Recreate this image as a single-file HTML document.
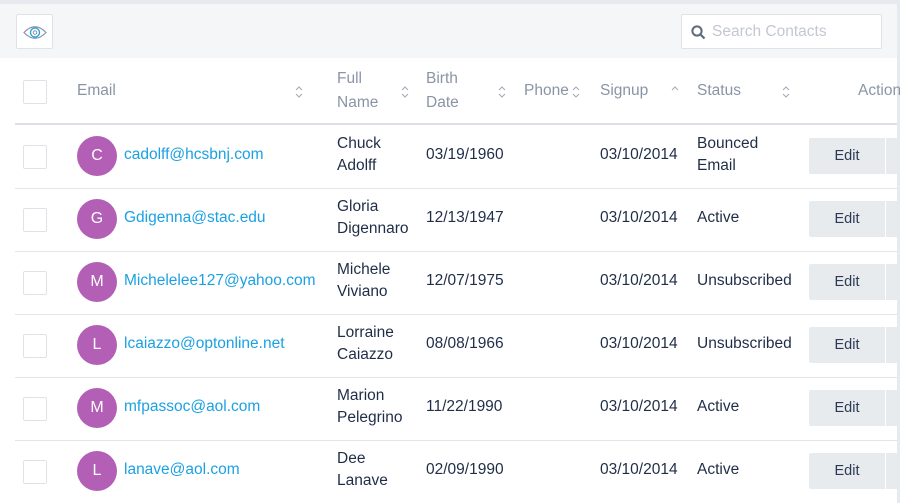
<!DOCTYPE html>
<html><head><style>
*{margin:0;padding:0;box-sizing:border-box}
body{width:900px;height:503px;overflow:hidden;background:#fff;font-family:"Liberation Sans",sans-serif;position:relative}
.top{position:absolute;left:0;top:0;width:900px;height:4px;background:#e6e9ed}
.bar{position:absolute;left:0;top:4px;width:897px;height:54px;background:#f5f6f8}
.rb{position:absolute;left:897px;top:0;width:3px;height:503px;background:#e6e9ed}
.eye{position:absolute;left:16px;top:14px;width:37px;height:35px;background:#fff;border:1px solid #dfe3e8;border-radius:2px}
.search{position:absolute;left:681px;top:14px;width:201px;height:35px;background:#fff;border:1px solid #dfe3e8;border-radius:2px;color:#c3c8d0;font-size:15.5px;line-height:33px;padding-left:30px}
.search svg{position:absolute;left:9px;top:10px}
.hd{position:absolute;color:#8a94a6;font-size:15.5px;line-height:24px}
.cb{position:absolute;left:23px;width:24px;height:24px;border:1px solid #dfe3e8;border-radius:2px;background:#fff}
.line{position:absolute;left:15px;width:882px;height:1px;background:#e2e5e9}
.row{position:absolute;left:0;width:897px;height:63px}
.row .cb{top:20px}
.av{position:absolute;left:77px;top:11px;width:40px;height:40px;border-radius:50%;background:#b25fb5;color:#fff;font-size:16px;text-align:center;line-height:40px}
.em{position:absolute;left:124px;top:19px;color:#1ba1e2;font-size:15.5px;line-height:22px}
.t{position:absolute;color:#1f2d47;font-size:15.5px;line-height:22px}
.t1{top:19px}.t2{top:8px}
.ed{position:absolute;left:809px;top:13px;width:76px;height:36px;background:#e8ebee;color:#2a3a54;font-size:14.5px;text-align:center;line-height:36px;border-radius:2px 0 0 2px}
.ed2{position:absolute;left:886px;top:13px;width:11px;height:36px;background:#e8ebee}
</style></head><body>
<div class="top"></div><div class="bar"></div><div class="rb"></div>
<div class="eye"><svg width="37" height="35" viewBox="0 0 37 35"><path d="M7 17.5 Q18 6 29 17.5 Q18 29 7 17.5Z" fill="none" stroke="#8a94a6" stroke-width="1.2"/><circle cx="18" cy="17.5" r="4.5" fill="none" stroke="#1ba1e2" stroke-width="1.3"/><circle cx="18" cy="17.5" r="1.8" fill="none" stroke="#8a94a6" stroke-width="1"/></svg></div>
<div class="search"><svg width="15" height="15" viewBox="0 0 15 15"><circle cx="6" cy="6" r="4.6" fill="none" stroke="#5f6b7d" stroke-width="2"/><path d="M9.4 9.4 L13.5 13.5" stroke="#5f6b7d" stroke-width="2.2"/></svg>Search Contacts</div>

<div class="cb" style="top:80px"></div>
<div class="hd" style="left:77px;top:79px">Email</div>
<div class="hd" style="left:337px;top:67px">Full<br>Name</div>
<div class="hd" style="left:426px;top:67px">Birth<br>Date</div>
<div class="hd" style="left:524px;top:79px">Phone</div>
<div class="hd" style="left:600px;top:79px">Signup</div>
<div class="hd" style="left:697px;top:79px">Status</div>
<div class="hd" style="left:858px;top:79px">Action</div>
<svg style="position:absolute;left:0;top:0" width="900" height="124">
<g fill="none" stroke="#a0a8b5" stroke-width="1"><path d="M296 90l3-3 3 3M296 94l3 3 3-3"/><path d="M402 90l3-3 3 3M402 94l3 3 3-3"/><path d="M499 90l3-3 3 3M499 94l3 3 3-3"/><path d="M573 90l3-3 3 3M573 94l3 3 3-3"/><path d="M672 90l3-3 3 3"/><path d="M783 90l3-3 3 3M783 94l3 3 3-3"/></g></svg>
<div class="line" style="top:123px;height:2px;background:#dcdfe3"></div>

<div class="row" style="top:125px"><div class="cb"></div><div class="av">C</div><div class="em">cadolff@hcsbnj.com</div><div class="t t2" style="left:337px">Chuck<br>Adolff</div><div class="t t1" style="left:426px">03/19/1960</div><div class="t t1" style="left:600px">03/10/2014</div><div class="t t2" style="left:697px">Bounced<br>Email</div><div class="ed">Edit</div><div class="ed2"></div></div>
<div class="line" style="top:188px"></div>
<div class="row" style="top:188px"><div class="cb"></div><div class="av">G</div><div class="em">Gdigenna@stac.edu</div><div class="t t2" style="left:337px">Gloria<br>Digennaro</div><div class="t t1" style="left:426px">12/13/1947</div><div class="t t1" style="left:600px">03/10/2014</div><div class="t t1" style="left:697px">Active</div><div class="ed">Edit</div><div class="ed2"></div></div>
<div class="line" style="top:251px"></div>
<div class="row" style="top:251px"><div class="cb"></div><div class="av">M</div><div class="em">Michelelee127@yahoo.com</div><div class="t t2" style="left:337px">Michele<br>Viviano</div><div class="t t1" style="left:426px">12/07/1975</div><div class="t t1" style="left:600px">03/10/2014</div><div class="t t1" style="left:697px">Unsubscribed</div><div class="ed">Edit</div><div class="ed2"></div></div>
<div class="line" style="top:314px"></div>
<div class="row" style="top:314px"><div class="cb"></div><div class="av">L</div><div class="em">lcaiazzo@optonline.net</div><div class="t t2" style="left:337px">Lorraine<br>Caiazzo</div><div class="t t1" style="left:426px">08/08/1966</div><div class="t t1" style="left:600px">03/10/2014</div><div class="t t1" style="left:697px">Unsubscribed</div><div class="ed">Edit</div><div class="ed2"></div></div>
<div class="line" style="top:377px"></div>
<div class="row" style="top:377px"><div class="cb"></div><div class="av">M</div><div class="em">mfpassoc@aol.com</div><div class="t t2" style="left:337px">Marion<br>Pelegrino</div><div class="t t1" style="left:426px">11/22/1990</div><div class="t t1" style="left:600px">03/10/2014</div><div class="t t1" style="left:697px">Active</div><div class="ed">Edit</div><div class="ed2"></div></div>
<div class="line" style="top:440px"></div>
<div class="row" style="top:440px"><div class="cb"></div><div class="av">L</div><div class="em">lanave@aol.com</div><div class="t t2" style="left:337px">Dee<br>Lanave</div><div class="t t1" style="left:426px">02/09/1990</div><div class="t t1" style="left:600px">03/10/2014</div><div class="t t1" style="left:697px">Active</div><div class="ed">Edit</div><div class="ed2"></div></div>
</body></html>
